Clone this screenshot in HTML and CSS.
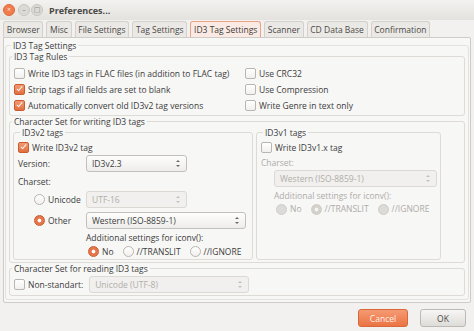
FILE: index.html
```html
<!DOCTYPE html>
<html lang="en">
<head>
    <meta charset="UTF-8">
    <title>Preferences...</title>
    <link rel="stylesheet" href="styles.css">
</head>
<body>
    <div class="window">
        <!-- Title bar -->
        <div class="titlebar">
            <span class="wbtn close">&#215;</span>
            <span class="wbtn">&#8211;</span>
            <span class="wbtn">&#9633;</span>
            <span class="title">Preferences...</span>
        </div>

        <!-- Tabs -->
        <div class="tabs">
            <div class="tab">Browser</div>
            <div class="tab">Misc</div>
            <div class="tab">File Settings</div>
            <div class="tab">Tag Settings</div>
            <div class="tab active">ID3 Tag Settings</div>
            <div class="tab">Scanner</div>
            <div class="tab">CD Data Base</div>
            <div class="tab">Confirmation</div>
        </div>

        <div class="notebook">
            <fieldset class="frame outer">
                <legend>ID3 Tag Settings</legend>

                <fieldset class="frame">
                    <legend>ID3 Tag Rules</legend>
                    <div class="rules">
                        <div class="col">
                            <label class="check"><span class="box"></span>Write ID3 tags in FLAC files (in addition to FLAC tag)</label>
                            <label class="check"><span class="box on"></span>Strip tags if all fields are set to blank</label>
                            <label class="check"><span class="box on"></span>Automatically convert old ID3v2 tag versions</label>
                        </div>
                        <div class="col">
                            <label class="check"><span class="box"></span>Use CRC32</label>
                            <label class="check"><span class="box"></span>Use Compression</label>
                            <label class="check"><span class="box"></span>Write Genre in text only</label>
                        </div>
                    </div>
                </fieldset>

                <fieldset class="frame">
                    <legend>Character Set for writing ID3 tags</legend>
                    <div class="charsets">
                        <fieldset class="frame v2">
                            <legend>ID3v2 tags</legend>
                            <label class="check"><span class="box on"></span>Write ID3v2 tag</label>
                            <div class="grid">
                                <span>Version:</span>
                                <div class="combo short">ID3v2.3<span class="arrows"></span></div>
                                <span class="full">Charset:</span>
                                <label class="radio-label"><span class="radio"></span>Unicode</label>
                                <div class="combo short off">UTF-16<span class="arrows"></span></div>
                                <label class="radio-label other"><span class="radio on"></span>Other</label>
                                <div class="combo other">Western (ISO-8859-1)<span class="arrows"></span></div>
                            </div>
                            <div class="iconv">
                                <div>Additional settings for iconv():</div>
                                <div class="radios">
                                    <label class="radio-label"><span class="radio on"></span>No</label>
                                    <label class="radio-label"><span class="radio"></span>//TRANSLIT</label>
                                    <label class="radio-label"><span class="radio"></span>//IGNORE</label>
                                </div>
                            </div>
                        </fieldset>

                        <fieldset class="frame v1">
                            <legend>ID3v1 tags</legend>
                            <label class="check"><span class="box"></span>Write ID3v1.x tag</label>
                            <div class="muted">Charset:</div>
                            <div class="v1-body">
                                <div class="combo off">Western (ISO-8859-1)<span class="arrows"></span></div>
                                <div class="muted gap">Additional settings for iconv():</div>
                                <div class="radios">
                                    <label class="radio-label muted"><span class="radio dim"></span>No</label>
                                    <label class="radio-label muted"><span class="radio dim on"></span>//TRANSLIT</label>
                                    <label class="radio-label muted"><span class="radio dim"></span>//IGNORE</label>
                                </div>
                            </div>
                        </fieldset>
                    </div>
                </fieldset>

                <fieldset class="frame">
                    <legend>Character Set for reading ID3 tags</legend>
                    <div class="reading">
                        <label class="check"><span class="box"></span>Non-standart:</label>
                        <div class="combo off">Unicode (UTF-8)<span class="arrows"></span></div>
                    </div>
                </fieldset>
            </fieldset>
        </div>

        <div class="buttons">
            <button class="button cancel">Cancel</button>
            <button class="button">OK</button>
        </div>
    </div>
</body>
</html>
```

FILE: styles.css
```css
body {
    margin: 0;
    background: #f2f1f0;
    font-family: "Open Sans", "DejaVu Sans", sans-serif;
    font-size: 8.5px;
    color: #3c3c3c;
}
.window {
    width: 474px;
    height: 331px;
    overflow: hidden;
}
.titlebar {
    height: 20px;
    display: flex;
    align-items: center;
    padding-left: 3px;
    background: linear-gradient(#f3f2f0, #e4e2de);
}
.wbtn {
    width: 10px;
    height: 10px;
    border-radius: 50%;
    margin-right: 1px;
    background: #dcdad6;
    border: 1px solid #c9c6c1;
    color: #8e8b86;
    font-size: 7px;
    line-height: 10px;
    text-align: center;
}
.wbtn.close {
    background: #f07b4c;
    border-color: #e06a3c;
    color: #fbe0d4;
    margin-right: 3px;
}
.title {
    margin-left: 5px;
    font-weight: bold;
    font-size: 9px;
    color: #4a4845;
}
.tabs {
    display: flex;
    gap: 3px;
    margin: 1px 0 0 3px;
    height: 16px;
}
.tab {
    padding: 0 2.7px;
    border: 1px solid #d4d1cc;
    border-bottom: none;
    border-radius: 3px 3px 0 0;
    background: #ebe9e6;
    line-height: 15px;
    color: #4c4a47;
}
.tab.active {
    background: #fbeae3;
    border-color: #eca385;
    color: #3c3c3c;
}
.notebook {
    height: 266px;
    margin: 0 3px 0 3px;
    border: 1px solid #cfccc7;
    border-radius: 0 2px 2px 2px;
    background: #f7f7f6;
    box-sizing: border-box;
    padding: 0 1px;
}
.frame {
    margin: 0;
    padding: 0;
    border: 1px solid #dedbd7;
    border-radius: 3px;
}
.frame legend {
    padding: 0 2px;
    margin-left: 2px;
    line-height: 11px;
}
.frame.outer {
    border-color: #e4e2de;
    padding: 0 3px 3px 3px;
    margin-top: 2px;
}
.rules {
    display: flex;
    padding: 3px 0 2px 4px;
}
.rules .col {
    display: flex;
    flex-direction: column;
}
.rules .col:first-child {
    width: 231px;
}
.check {
    display: flex;
    align-items: center;
    height: 16px;
    white-space: nowrap;
}
.box {
    width: 9px;
    height: 9px;
    border: 1px solid #b9b6b1;
    border-radius: 2px;
    background: linear-gradient(#ffffff, #f1f0ee);
    margin-right: 3px;
    flex: none;
    position: relative;
}
.box.on {
    background: linear-gradient(#f29a74, #e1703f);
    border-color: #c95d31;
}
.box.on::after {
    content: "";
    position: absolute;
    left: 3px;
    top: 0px;
    width: 2px;
    height: 5px;
    border: solid #fff4ee;
    border-width: 0 1.5px 1.5px 0;
    transform: rotate(40deg);
}
.charsets {
    display: flex;
    gap: 3px;
    padding: 0 3px 2px 3px;
}
.v2 {
    width: 240px;
    padding: 1px 4px 0 4px;
    box-sizing: border-box;
}
.v1 {
    width: 185px;
    padding: 1px 3px 3px 4px;
    box-sizing: border-box;
}
.v1 .combo {
    width: auto;
}
.grid {
    display: grid;
    grid-template-columns: 68px auto;
    align-items: center;
    row-gap: 1px;
    justify-items: start;
}
.grid .full {
    grid-column: 1 / 3;
    line-height: 17px;
}
.grid .other {
    margin-top: 3px;
}
.radio-label {
    display: flex;
    align-items: center;
    white-space: nowrap;
}
.grid .radio-label {
    padding-left: 16px;
}
.radio {
    width: 9px;
    height: 9px;
    border-radius: 50%;
    border: 1px solid #b9b6b1;
    background: linear-gradient(#ffffff, #f1f0ee);
    margin-right: 3px;
    flex: none;
}
.radio.on {
    border-color: #c95d31;
    background: radial-gradient(circle, #fff 0 1.6px, #e7764a 2.2px);
}
.radio.dim {
    border-color: #cfccc8;
    background: #dddbd8;
}
.radio.dim.on {
    background: radial-gradient(circle, #f6f5f4 0 1.6px, #d5d2ce 2.2px);
}
.combo {
    position: relative;
    width: 160px;
    height: 17px;
    line-height: 16px;
    box-sizing: border-box;
    padding: 0 5px;
    border: 1px solid #c3c0bb;
    border-radius: 3px;
    background: linear-gradient(#fdfdfc, #eeedeb);
    color: #3c3c3c;
}
.combo.short {
    width: 101px;
}
.combo.off {
    background: #f1f0ee;
    border-color: #dcd9d5;
    color: #b0aea9;
}
.arrows {
    position: absolute;
    right: 6px;
    top: 4px;
    width: 0;
    height: 7px;
    border-left: 2px solid transparent;
    border-right: 2px solid transparent;
}
.arrows::before,
.arrows::after {
    content: "";
    position: absolute;
    left: -2px;
    border-left: 2px solid transparent;
    border-right: 2px solid transparent;
}
.arrows::before {
    top: 0;
    border-bottom: 2px solid #6d6b67;
}
.arrows::after {
    bottom: 0;
    border-top: 2px solid #6d6b67;
}
.combo.off .arrows::before {
    border-bottom-color: #c3c0bb;
}
.combo.off .arrows::after {
    border-top-color: #c3c0bb;
}
.iconv {
    padding-left: 68px;
    margin-top: 3px;
}
.radios {
    display: flex;
    gap: 9px;
    height: 16px;
    align-items: center;
    padding-left: 2px;
}
.muted {
    color: #aeaca8;
    line-height: 14px;
}
.muted.gap {
    margin-top: 2px;
}
.v1-body {
    padding-left: 13px;
}
.v1-body .radios {
    height: 12px;
}
.v1 .check {
    margin-bottom: 1px;
}
.reading {
    display: flex;
    align-items: center;
    gap: 6px;
    padding: 2px 4px 2px 4px;
}
.buttons {
    display: flex;
    justify-content: flex-end;
    gap: 12px;
    padding: 6px 8px 0 0;
}
.button {
    height: 18px;
    width: 46px;
    font-family: inherit;
    font-size: 8.5px;
    border: 1px solid #bcb9b4;
    border-radius: 3px;
    background: linear-gradient(#f7f6f5, #dedcd8);
    color: #4a4845;
}
.button.cancel {
    width: 50px;
    background: linear-gradient(#f59a72, #ea7443);
    border-color: #d8673a;
    color: #fff1ea;
}
```
